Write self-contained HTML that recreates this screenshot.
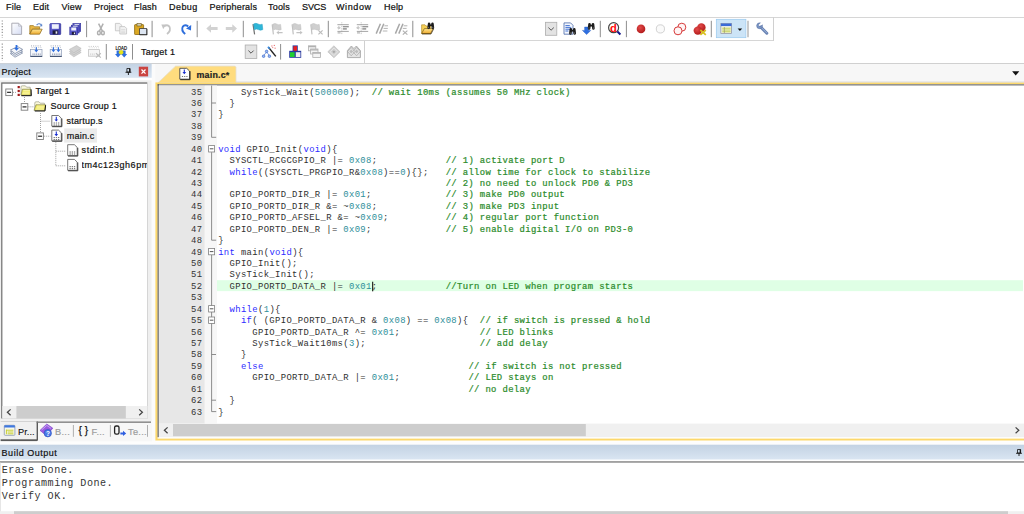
<!DOCTYPE html>
<html lang="en"><head><meta charset="utf-8"><title>uVision</title>
<style>
html,body{margin:0;padding:0;background:#fff;}
body{width:1024px;height:514px;position:relative;overflow:hidden;font-family:"Liberation Sans", sans-serif;color:#222;}
.abs{position:absolute;}
.menu span{position:absolute;top:1.4px;-webkit-text-stroke:0.22px #111;font-size:9px;letter-spacing:0.2px;line-height:12px;color:#111;white-space:nowrap;}
.ui{-webkit-text-stroke:0.2px currentColor;font-family:"Liberation Sans", sans-serif;font-size:9px;letter-spacing:0.2px;line-height:12px;color:#111;white-space:pre;position:absolute;}
.ln{position:absolute;left:159px;width:43.4px;text-align:right;font-family:"Liberation Mono", monospace;font-size:8.9px;letter-spacing:0.36px;color:#333;height:11.43px;line-height:11.43px;}
.cl{position:absolute;left:218.2px;font-family:"Liberation Mono", monospace;font-size:8.9px;letter-spacing:0.36px;color:#303030;white-space:pre;height:11.43px;line-height:11.43px;}
.c{color:#2c8c2c;-webkit-text-stroke:0.22px #2c8c2c;}
.n{color:#2f8f9a;}
.k{color:#2b2bff;}
.bo{position:absolute;left:1.7px;font-family:"Liberation Mono", monospace;font-size:10.1px;letter-spacing:0.5px;color:#363636;white-space:pre;line-height:13px;height:13px;}
svg{position:absolute;overflow:visible;}
</style></head><body>
<div class="menu"><span style="left:6.0px;">File</span><span style="left:33.0px;">Edit</span><span style="left:61.5px;">View</span><span style="left:94.0px;">Project</span><span style="left:134.0px;">Flash</span><span style="left:169.0px;letter-spacing:0.45px;">Debug</span><span style="left:209.5px;">Peripherals</span><span style="left:268.0px;">Tools</span><span style="left:302.0px;letter-spacing:-0.1px;">SVCS</span><span style="left:336.0px;letter-spacing:0.6px;">Window</span><span style="left:384.0px;">Help</span></div>
<svg style="left:0;top:0" width="1024" height="514" viewBox="0 0 1024 514"><rect x="0" y="17" width="1024" height="1" fill="#d6d6d6"/><rect x="0" y="40" width="773" height="1" fill="#d6d6d6"/><rect x="773" y="17" width="1" height="24" fill="#d0d0d0"/><rect x="0" y="63" width="1024" height="1" fill="#d0d0d0"/><rect x="364" y="41" width="1" height="23" fill="#d0d0d0"/></svg><svg style="left:0;top:0" width="1024" height="64" viewBox="0 0 1024 64">
<defs>
<linearGradient id="gpage" x1="0" y1="0" x2="1" y2="1"><stop offset="0" stop-color="#ffffff"/><stop offset="1" stop-color="#d5dcf3"/></linearGradient>
<linearGradient id="gfold" x1="0" y1="0" x2="0" y2="1"><stop offset="0" stop-color="#ffe795"/><stop offset="1" stop-color="#eeaa2c"/></linearGradient>
<linearGradient id="gflop" x1="0" y1="0" x2="1" y2="1"><stop offset="0" stop-color="#6a6ad8"/><stop offset="1" stop-color="#3a3aa8"/></linearGradient>
<radialGradient id="gred" cx="0.4" cy="0.35" r="0.7"><stop offset="0" stop-color="#e24a4a"/><stop offset="1" stop-color="#b01818"/></radialGradient>
<g id="bino"><path d="M1.7 0.9 L1.3 4.5 M4.7 0.9 L5.1 4.5" stroke="#1c1c1c" stroke-width="2.3" stroke-linecap="round" fill="none"/><rect x="1.7" y="1.4" width="3" height="1.5" fill="#1c1c1c"/><path d="M1.2 3.6 v1.2 M5 3.6 v1.2" stroke="#8a8a8a" stroke-width="0.6"/></g>
</defs>
<!-- grippers -->
<path d="M2.3 20.4 V38" stroke="#9c9c9c" stroke-width="1.3" stroke-dasharray="1.2 1.65"/>
<path d="M2.3 43.6 V61" stroke="#9c9c9c" stroke-width="1.3" stroke-dasharray="1.2 1.65"/>
<!-- separators row1 -->
<g stroke="#8e8e8e" stroke-width="1">
<path d="M86.6 20.8 V37.2 M152.1 20.8 V37.2 M197.2 20.8 V37.2 M243.3 20.8 V37.2 M328.3 20.8 V37.2 M412.8 20.8 V37.2 M600.3 20.8 V37.2 M626.4 20.8 V37.2 M711.3 20.8 V37.2"/>
<path d="M748 20.8 V37.2" stroke="#b4b4b4" stroke-width="1.4"/>
</g>
<!-- New -->
<path d="M11.8 23.2 H18.6 L21.6 26.2 V34.4 H11.8 Z" fill="url(#gpage)" stroke="#a4a4ae" stroke-width="0.9"/>
<path d="M18.6 23.2 V26.2 H21.6" fill="none" stroke="#b4b4be" stroke-width="0.7"/>
<!-- Open -->
<path d="M29.8 34 V25.6 H33.4 L34.4 26.8 H39.6 V29.2 H32.2 Z" fill="#e9b846" stroke="#9a741c" stroke-width="0.7"/>
<path d="M29.8 34.2 L32.4 29.2 H42.2 L39.6 34.2 Z" fill="url(#gfold)" stroke="#8a661a" stroke-width="0.7"/>
<path d="M36.6 25.2 Q38.8 22.6 41 24.6" fill="none" stroke="#5a84cc" stroke-width="1.2"/>
<path d="M39.6 26.4 L42.3 26.2 L42 23.4 Z" fill="#5a84cc"/>
<!-- Save -->
<g id="flop"><rect x="49.9" y="23.6" width="10.8" height="10.9" rx="0.6" fill="url(#gflop)" stroke="#2e2e98" stroke-width="0.7"/>
<rect x="51.9" y="24.2" width="6.9" height="4.6" fill="#eef1fb"/>
<rect x="52.6" y="30.4" width="5.6" height="4" fill="#1c1c3a"/>
<rect x="55.6" y="31.3" width="1.7" height="2.4" fill="#e8e8f4"/></g>
<!-- Save all -->
<g transform="translate(69.5,23.2)">
<rect x="3.4" y="0.3" width="7.8" height="7.8" fill="#5656c6" stroke="#2e2e98" stroke-width="0.6"/>
<rect x="5" y="0.8" width="4.6" height="2.6" fill="#e4e8f8"/>
<rect x="1.8" y="2" width="7.8" height="7.8" fill="#5656c6" stroke="#2e2e98" stroke-width="0.6"/>
<rect x="3.4" y="2.5" width="4.6" height="2.6" fill="#e4e8f8"/>
<rect x="0.3" y="3.8" width="7.8" height="7.8" fill="#5a5ace" stroke="#2e2e98" stroke-width="0.6"/>
<rect x="1.8" y="4.3" width="4.8" height="3" fill="#eef1fb"/>
<rect x="2.3" y="8.6" width="3.8" height="3" fill="#1c1c3a"/>
<rect x="4.4" y="9.3" width="1.1" height="1.7" fill="#e8e8f4"/>
</g>
<!-- Cut -->
<g fill="none" stroke="#b0b0b0" stroke-width="1.5">
<path d="M98.6 23.6 L102.4 31.2 M103.2 23.6 L99.4 31.2"/>
<ellipse cx="98.9" cy="32.9" rx="1.4" ry="1.9"/><ellipse cx="102.9" cy="32.9" rx="1.4" ry="1.9"/>
</g>
<!-- Copy -->
<g fill="#f1f1f1" stroke="#c2c2c2" stroke-width="0.8">
<path d="M115.4 23.4 H119.8 L121.6 25.2 V30.8 H115.4 Z"/>
<path d="M119.8 26.6 H124.8 L126.6 28.4 V34 H119.8 Z"/>
<path d="M121.2 29.6 h4 M121.2 31.2 h4 M121.2 32.6 h4" stroke="#cfcfcf" stroke-width="0.6"/>
</g>
<!-- Paste -->
<rect x="134.6" y="24.6" width="9" height="9.9" rx="0.6" fill="#dba823" stroke="#8c6a12" stroke-width="0.8"/>
<rect x="137" y="23.4" width="4.2" height="2.6" fill="#d8d0b0" stroke="#6e5a1e" stroke-width="0.6"/>
<rect x="139.6" y="28.6" width="7.1" height="6" fill="#dce5f1" stroke="#3c3c3c" stroke-width="0.8"/>
<path d="M139.6 34.9 H147.1 V29" fill="none" stroke="#222" stroke-width="0.6"/>
<!-- Undo -->
<path d="M167 34 Q171.4 30.4 169.4 26.6 Q167.4 24 164 26.4" fill="none" stroke="#c4c4c4" stroke-width="1.8"/>
<path d="M161.4 24.6 L165.8 24.6 L163.2 29.2 Z" fill="#c4c4c4"/>
<!-- Redo -->
<path d="M185.2 34 Q180.8 30.4 182.8 26.6 Q184.8 24 188.2 26.4" fill="none" stroke="#2f6fdc" stroke-width="1.9"/>
<path d="M191.2 25 L191 30.4 L186 28.6 Z" fill="#2f6fdc"/>
<!-- Back / Fwd -->
<path d="M206.3 28.5 L211 24.2 V26.9 H217.6 V30.1 H211 V32.8 Z" fill="#d2d2d2"/>
<path d="M237 28.5 L232.3 24.2 V26.9 H225.8 V30.1 H232.3 V32.8 Z" fill="#d2d2d2"/>
<!-- Flag cyan -->
<path d="M253 24.2 L254.6 34.4" stroke="#6e6e6e" stroke-width="1.2"/>
<path d="M253.6 24 Q256 22.6 258 24 Q260 25.2 262.2 24.2 L262.8 29.6 Q260.4 30.8 258.4 29.6 Q256.4 28.4 254.4 29.8 Z" fill="#2fb6d8" stroke="#1f9cc0" stroke-width="0.5"/>
<!-- gray flags -->
<g id="gflag"><path d="M272.2 24.4 L273.4 34.4" stroke="#c2c2c2" stroke-width="1.2"/>
<path d="M272.8 24.2 Q275 22.8 277 24.2 Q278.8 25.2 280.6 24.4 L281.2 29.6 Q279 30.6 277.2 29.6 Q275.4 28.6 273.6 29.8 Z" fill="#cfcfcf" stroke="#bdbdbd" stroke-width="0.5"/></g>
<path d="M276.4 32.6 L278.8 30.8 V31.9 H282.6 V33.3 H278.8 V34.4 Z" fill="#c2c2c2"/>
<use href="#gflag" x="19.9"/>
<path d="M302.6 32.6 L300.2 30.8 V31.9 H296.4 V33.3 H300.2 V34.4 Z" fill="#c2c2c2"/>
<use href="#gflag" x="38.6"/>
<path d="M318.4 30.4 L322.6 34.4 M322.6 30.4 L318.4 34.4" stroke="#bcbcbc" stroke-width="1.2"/>
<!-- indent -->
<g id="ind" fill="none">
<path d="M337.4 24.7 H348.8 M337.4 31.4 H348.8" stroke="#a6a6a6" stroke-width="1"/>
<path d="M342.9 26.7 H348.8" stroke="#929292" stroke-width="1.3"/>
<path d="M342.9 28.9 H346.8" stroke="#8a8a8a" stroke-width="1.4"/>
<path d="M337.6 32.9 H340.6" stroke="#b4b4b4" stroke-width="1.2"/>
<path d="M341.8 22.4 V35" stroke="#a0a0a0" stroke-width="0.7" stroke-dasharray="0.9 0.9"/>
</g>
<path d="M337 27.8 H339 M338.6 26.4 L340.4 27.8 L338.6 29.2 Z" stroke="#c4c4c4" stroke-width="0.8" fill="#c4c4c4"/>
<use href="#ind" x="19.4"/>
<path d="M360 27.8 H358 M358.4 26.4 L356.6 27.8 L358.4 29.2 Z" stroke="#c4c4c4" stroke-width="0.8" fill="#c4c4c4"/>
<!-- comment / uncomment -->
<g stroke="#a8a8a8" stroke-width="1.5" fill="none">
<path d="M376.2 33.6 L380.4 23.8 M379.6 33.6 L383.8 23.8"/>
<path d="M384.4 25.8 H388 M383.6 28.4 H387.8 M382.8 31 H387.4" stroke-width="1" stroke="#b4b4b4"/>
<path d="M395.4 33.6 L399.6 23.8 M398.8 33.6 L403 23.8"/>
<path d="M403.6 25.8 H407.4 M402.8 28.4 H406.6" stroke-width="1" stroke="#b4b4b4"/>
<path d="M402.8 30.6 L407.4 34.6 M407.4 30.6 L402.8 34.6" stroke-width="1.2" stroke="#b0b0b0"/>
</g>
<!-- find in files -->
<path d="M421.6 33.4 V24.8 H425 L426 26 H430.8 V33.4 Z" fill="#f5cf55" stroke="#a8842a" stroke-width="0.6"/>
<path d="M421.6 33.5 L424.4 28.6 H433.2 L430.6 33.5 Z" fill="url(#gfold)" stroke="#7a5a14" stroke-width="0.7"/>
<path d="M422 34 H431 L433.6 29" fill="none" stroke="#3a2a0a" stroke-width="0.7"/>
<use href="#bino" transform="translate(427.2,22.8) scale(1.12)"/>
<!-- combo button -->
<rect x="545.4" y="22.3" width="11.4" height="13" fill="#e3e3e3" stroke="#adadad" stroke-width="0.8"/>
<path d="M548.4 27.6 L551.1 30.2 L553.8 27.6" fill="none" stroke="#444" stroke-width="0.9"/>
<!-- doc + binoculars -->
<path d="M564 22.9 H570.6 L573 25.3 V34.2 H564 Z" fill="#f4f8ff" stroke="#4a68a8" stroke-width="0.8"/>
<path d="M565.4 25.6 h4.4 M565.4 27.4 h5.8 M565.4 29.2 h5.8 M565.4 31 h3" stroke="#3a6cd0" stroke-width="0.95"/>
<use href="#bino" transform="translate(568.9,28.3) scale(1.14)"/>
<!-- blue down arrow + binoculars -->
<path d="M584.6 27 H588.6 V30.4 H590.8 L586.6 34.6 L582.4 30.4 H584.6 Z" fill="#2f6fe0" stroke="#2458b8" stroke-width="0.4"/>
<use href="#bino" transform="translate(587.6,23.2) scale(1.14)"/>
<!-- debug -->
<circle cx="613.6" cy="27.7" r="5" fill="#fff" stroke="#444" stroke-width="1.2"/>
<path d="M617.4 31.6 L620.4 34.4" stroke="#14148a" stroke-width="2"/>
<text x="609.9" y="31.6" font-family="Liberation Sans, sans-serif" font-weight="bold" font-size="11.2" fill="#ff0a0a">d</text>
<!-- red ball -->
<circle cx="641" cy="28.9" r="4.3" fill="url(#gred)"/>
<!-- empty circle -->
<circle cx="660.4" cy="28.9" r="4.1" fill="#fafafa" stroke="#c6c6c6" stroke-width="0.8"/>
<!-- double circles -->
<circle cx="681.8" cy="27.2" r="4" fill="#fff4f4" stroke="#d63a3a" stroke-width="1"/>
<circle cx="678" cy="30.8" r="4" fill="#fff4f4" stroke="#d63a3a" stroke-width="1"/>
<!-- red balls + x -->
<circle cx="701.4" cy="27.4" r="4.2" fill="url(#gred)"/>
<circle cx="697.8" cy="30.6" r="4.2" fill="url(#gred)"/>
<path d="M700.4 30 L705.8 34.8 M705.8 30 L700.4 34.8" stroke="#d8c020" stroke-width="1.7"/>
<!-- selected window button -->
<rect x="716.3" y="19.3" width="29.6" height="18.4" fill="#cce4f7" stroke="#99c9ef" stroke-width="0.7"/>
<rect x="720.9" y="23.5" width="10.6" height="10" fill="#f6f6e6" stroke="#8a8a9a" stroke-width="0.7"/>
<rect x="720.9" y="23.5" width="10.6" height="2.6" fill="#3a6ad8"/>
<path d="M722.2 28.2 H730.6 M722.2 30 H730.6 M722.2 31.8 H730.6" stroke="#b8c838" stroke-width="0.9"/>
<path d="M724.4 27 V33" stroke="#8a8a6a" stroke-width="0.6"/>
<path d="M737.6 28.4 H742.2 L739.9 30.9 Z" fill="#111"/>
<!-- wrench -->
<path d="M760.6 27 L766.8 33.2" stroke="#6a84b4" stroke-width="3" stroke-linecap="round"/>
<path d="M761 27.2 L766.6 32.8" stroke="#9ab0d8" stroke-width="1" stroke-linecap="round"/>
<path d="M756.6 25.6 Q756.6 29 760 28.8 Q763 28.2 762.4 24.8 L760 26.8 L758.2 25 L760.4 22.8 Q757 22.4 756.6 25.6 Z" fill="#7a94c4" stroke="#546ea0" stroke-width="0.5"/>
</svg>

<svg style="left:0;top:0" width="400" height="64" viewBox="0 0 400 64">
<g stroke="#8e8e8e" stroke-width="1"><path d="M106.3 44 V59.6 M132.5 44 V59.6 M280.6 44 V59.6"/></g>
<!-- translate: stack + arrow -->
<g fill="#f4f6fa" stroke="#6a7a98" stroke-width="0.7">
<path d="M10.4 53.6 L17.6 50.2 L22.6 53 L15 57.2 Z"/>
<path d="M10.4 51.8 L17.6 48.4 L22.6 51.2 L15 55.4 Z"/>
<path d="M10.4 50 L17.6 46.6 L22.6 49.4 L15 53.6 Z"/>
</g>
<path d="M15.6 45 H17.4 V48 H19 L16.5 50.8 L14 48 H15.6 Z" fill="#2f6fe0"/>
<!-- build -->
<g id="bld">
<rect x="30.6" y="49.6" width="11.4" height="6.6" fill="#f6f8fc" stroke="#8c9ab6" stroke-width="0.7"/>
<path d="M30.4 56.4 H42.2" stroke="#3a4a6a" stroke-width="1"/>
<path d="M33 53.4 V55.2 M34.8 53.4 V55.2 M36.6 53.4 V55.2 M38.4 53.4 V55.2 M40.2 53.4 V55.2" stroke="#8a96b0" stroke-width="0.8"/>
<path d="M31 45.9 H42" stroke="#9aa0b0" stroke-width="0.9" stroke-dasharray="1 1.2"/>
<path d="M31.6 47.6 H41.4" stroke="#b4bac8" stroke-width="0.8" stroke-dasharray="1 1.2"/>
</g>
<path d="M35.7 47.2 H36.9 V50 H38.2 L36.3 52.4 L34.4 50 H35.7 Z" fill="#2f6fe0"/>
<!-- rebuild -->
<use href="#bld" x="19.6"/>
<path d="M52.8 47.2 H54 V49.8 H55.3 L53.4 52.2 L51.5 49.8 H52.8 Z" fill="#2f6fe0"/>
<path d="M57.8 47.2 H59 V49.8 H60.3 L58.4 52.2 L56.5 49.8 H57.8 Z" fill="#2f6fe0"/>
<!-- batch build (gray stack) -->
<g fill="#d2d2d2" stroke="#b8b8b8" stroke-width="0.6">
<path d="M69.4 53.4 L76.6 49.6 L81.2 52.4 L73.8 56.8 Z"/>
<path d="M69.4 51.4 L76.6 47.6 L81.2 50.4 L73.8 54.8 Z"/>
<path d="M69.4 49.4 L76.6 45.6 L81.2 48.4 L73.8 52.8 Z"/>
</g>
<!-- stop build (gray) -->
<rect x="88.4" y="49.6" width="11" height="6.6" fill="#f6f6f6" stroke="#c4c4c4" stroke-width="0.8"/>
<path d="M88.6 46.4 H99.4" stroke="#c8c8c8" stroke-width="1" stroke-dasharray="1 1.2"/>
<path d="M89.4 47.8 H99" stroke="#d4d4d4" stroke-width="0.8" stroke-dasharray="1 1.2"/>
<path d="M90.6 53.4 V55.2 M92.4 53.4 V55.2 M94.2 53.4 V55.2" stroke="#cfcfcf" stroke-width="0.8"/>
<path d="M96 53.2 L100.8 57.6 M100.8 53.2 L96 57.6" stroke="#bcbcbc" stroke-width="1.2"/>
<!-- LOAD -->
<text x="115.4" y="49.5" font-family="Liberation Sans, sans-serif" font-size="4.5" fill="#000" stroke="#000" stroke-width="0.15" textLength="11.6" lengthAdjust="spacingAndGlyphs">LOAD</text>
<path d="M116.6 50.4 H119.4 V54 H121 L118 57.6 L115 54 H116.6 Z" fill="#2f6fe0"/>
<path d="M122.8 50.4 H125.6 V54 H127.2 L124.2 57.6 L121.2 54 H122.8 Z" fill="#2f6fe0"/>
<circle cx="121.1" cy="52.3" r="2.15" fill="#e4e41c" stroke="#b4b414" stroke-width="0.4"/>
<!-- combo button -->
<rect x="245.2" y="45" width="11.6" height="13.4" fill="#e3e3e3" stroke="#adadad" stroke-width="0.8"/>
<path d="M248.4 50.6 L251 53.2 L253.6 50.6" fill="none" stroke="#444" stroke-width="0.9"/>
<!-- magic wand -->
<path d="M268.6 47.4 L275.8 56.4" stroke="#222" stroke-width="1.5"/>
<path d="M268 46.8 L269.6 48.8" stroke="#3a8ae0" stroke-width="1.8"/>
<path d="M271.4 46 h1 M273.8 45.4 h1 M274.6 48.2 h1 M272.4 47.6 h0.8" stroke="#e03a3a" stroke-width="0.9"/>
<g fill="#9ab8f0" stroke="#2f5fc8" stroke-width="0.6">
<circle cx="266.6" cy="51.4" r="1.3"/><circle cx="263.6" cy="56.2" r="1.3"/><circle cx="269.4" cy="56.2" r="1.3"/>
</g>
<path d="M266.2 52.4 L264 55.2 M267 52.4 L269 55.2" stroke="#2f5fc8" stroke-width="0.6"/>
<!-- blocks -->
<rect x="289.2" y="50.8" width="12" height="7" fill="#2a3aa0"/>
<rect x="292.6" y="45.4" width="5.2" height="6" fill="#2a3aa0"/>
<rect x="293.4" y="46.2" width="3.6" height="4.6" fill="#e82020"/>
<rect x="290" y="52.2" width="4.6" height="4.8" fill="#20d030"/>
<rect x="295.8" y="52.2" width="4.6" height="4.8" fill="#f0f0f0"/>
<!-- windows gray -->
<g fill="#f4f4f4" stroke="#b0b0b0" stroke-width="0.8">
<rect x="308.4" y="45.8" width="7.4" height="5"/><rect x="310.6" y="49" width="7.4" height="5"/><rect x="312.8" y="52.4" width="7.8" height="5"/>
</g>
<path d="M308.4 46.6 h7.4 M310.6 49.8 h7.4 M312.8 53.2 h7.8" stroke="#b0b0b0" stroke-width="1.2"/>
<!-- diamond gray -->
<path d="M333.9 45.8 L340 51.8 L333.9 57.8 L327.8 51.8 Z" fill="#cfcfcf" stroke="#bcbcbc" stroke-width="0.6"/>
<path d="M333.9 48 L337.6 51.8 L333.9 55.6 L330.2 51.8 Z" fill="none" stroke="#efefef" stroke-width="0.7"/>
<path d="M333.9 50.4 L335.4 51.8 L333.9 53.2 L332.4 51.8 Z" fill="#a8a8a8"/>
<!-- double diamond envelope -->
<path d="M347.4 57.6 V50.6 L351.4 46 L353.9 48.6 L356.4 46 L360.4 50.6 V57.6 Z" fill="#e4e4e4" stroke="#9c9c9c" stroke-width="0.8"/>
<path d="M351.2 47.4 L355 51.6 L351.2 55.8 L347.6 51.6 Z M356.6 47.4 L360.2 51.6 L356.6 55.8 L352.8 51.6 Z" fill="none" stroke="#a8a8a8" stroke-width="0.7"/>
<path d="M351.2 49.6 L353 51.6 L351.2 53.6 L349.4 51.6 Z M356.6 49.6 L358.4 51.6 L356.6 53.6 L354.8 51.6 Z" fill="#bdbdbd"/>
</svg>
<div class="ui" style="left:141px;top:46.2px">Target 1</div>

<svg style="left:0;top:0" width="1024" height="514" viewBox="0 0 1024 514"><defs><linearGradient id="lg1" x1="0" y1="0" x2="0" y2="1"><stop offset="0" stop-color="#c3d2e3"/><stop offset="1" stop-color="#d9e5f2"/></linearGradient></defs><rect x="0" y="63.6" width="151.7" height="14.2" fill="url(#lg1)"/></svg><div class="ui" style="left:1.5px;top:65.7px">Project</div><svg style="left:120px;top:64px" width="32" height="15" viewBox="120 64 32 15">
<path d="M126.9 68.5 H130 V72 H126.9 Z" fill="none" stroke="#111" stroke-width="0.8"/>
<path d="M129.7 68.5 V72" stroke="#111" stroke-width="1.2"/>
<path d="M125.5 72.3 H131.3" stroke="#111" stroke-width="0.9"/>
<path d="M128.4 72.4 V75" stroke="#111" stroke-width="0.9"/>
<rect x="138.8" y="66.7" width="9.3" height="9.7" fill="#ca4542"/>
<path d="M141.5 69.5 L145.5 73.6 M145.5 69.5 L141.5 73.6" stroke="#fff" stroke-width="1.25"/>
</svg>

<svg style="left:0;top:0" width="1024" height="514" viewBox="0 0 1024 514"><rect x="0" y="80.3" width="151.6" height="341" fill="#efefef"/><rect x="1.2" y="82.4" width="146.8" height="336.8" fill="#e3e3e3"/><rect x="1.2" y="82.4" width="146" height="336" fill="#707070"/><rect x="2.4" y="83.7" width="144.8" height="334.7" fill="#fff"/><rect x="64.2" y="128.4" width="32.8" height="14.2" fill="#ebebeb"/>
</svg><svg style="left:0;top:0" width="152" height="200" viewBox="0 0 152 200">
<defs>
<g id="fsrc"><path d="M0.5 0.5 H7.2 L10 3.2 V11.2 H0.5 Z" fill="#fff" stroke="#555" stroke-width="0.8"/>
<path d="M0.9 11.7 H10.6 V3.6" fill="none" stroke="#222" stroke-width="0.8"/>
<path d="M5 1.8 V5.6" stroke="#1a2fd0" stroke-width="1.1"/><path d="M3.2 4.4 L5 6.6 L6.8 4.4 Z" fill="#1a2fd0"/>
<path d="M2.3 8 h1.3 M4.5 8 h1.3 M6.7 8 h1.3 M2.3 10 h1.3 M4.5 10 h1.3 M6.7 10 h1.3" stroke="#444" stroke-width="0.8"/></g>
<g id="fhdr"><path d="M0.5 0.5 H7.2 L10 3.2 V11.4 H0.5 Z" fill="#fff" stroke="#555" stroke-width="0.8"/>
<path d="M0.9 11.9 H10.6 V3.6" fill="none" stroke="#222" stroke-width="0.8"/>
<path d="M2.3 7.8 h1.3 M4.5 7.8 h1.3 M6.7 7.8 h1.3 M2.3 9.8 h1.3 M4.5 9.8 h1.3 M6.7 9.8 h1.3" stroke="#333" stroke-width="0.8"/></g>
<g id="xbox"><rect x="0.4" y="0.4" width="6.6" height="6.6" fill="#fff" stroke="#7c7c7c" stroke-width="0.9"/><path d="M1.7 3.7 H5.7" stroke="#111" stroke-width="1.1"/></g>
</defs>
<!-- dotted connectors -->
<g stroke="#8c8c8c" stroke-width="0.8" stroke-dasharray="1 1" fill="none">
<path d="M13 92.4 H17"/>
<path d="M24.5 97 V103"/>
<path d="M28.4 106.8 H33.4"/>
<path d="M40.5 113 V136.2"/>
<path d="M40.5 121.2 H50.6"/>
<path d="M44.2 136.2 H50.6"/>
<path d="M55.8 142.2 V165.8"/>
<path d="M55.8 151.2 H66"/>
<path d="M55.8 165.8 H66"/>
</g>
<use href="#xbox" x="5.4" y="88.6"/>
<use href="#xbox" x="20.8" y="103.2"/>
<use href="#xbox" x="36.4" y="132.5"/>
<!-- target icon -->
<g fill="#a01818"><rect x="17.6" y="86" width="2.2" height="2.2"/><rect x="17.6" y="89.9" width="2.2" height="2.2"/><rect x="17.6" y="93.8" width="2.2" height="2.2"/></g>
<path d="M21 95 V87 Q21 85.8 22.2 85.8 H25.4 L26.6 87.2 H30.2 V95 Z" fill="#fbf9dc" stroke="#8e8e7a" stroke-width="0.6"/>
<path d="M21 95.2 L22.4 89.2 H31 L30.4 95.2 Z" fill="#f1ea62" stroke="#6e6e4a" stroke-width="0.6"/>
<path d="M23.4 90.6 H29.8 M23 92.2 H29.6 M22.6 93.8 H29.4" stroke="#fbf8c0" stroke-width="0.7"/>
<path d="M31 89.4 L31.4 95.7 H21.4" fill="none" stroke="#111" stroke-width="1"/>
<!-- group folder icon -->
<path d="M34.8 110.2 V103 Q34.8 101.8 36 101.8 H39 L40.2 103.2 H44.4 V110.2 Z" fill="#fbf9dc" stroke="#8e8e7a" stroke-width="0.6"/>
<path d="M34 110.4 L36 104.8 H45.6 L44.6 110.4 Z" fill="#f1ea62" stroke="#6e6e4a" stroke-width="0.6"/>
<path d="M37 106.2 H44.4 M36.6 107.8 H44.2 M36 109.2 H44" stroke="#fbf8c0" stroke-width="0.7"/>
<path d="M45.6 105.2 L45 111 H34.8" fill="none" stroke="#111" stroke-width="1"/>
<use href="#fsrc" x="51.3" y="115"/>
<use href="#fsrc" x="51.3" y="129.6"/>
<use href="#fhdr" x="67.2" y="144.2"/>
<use href="#fhdr" x="67.2" y="158.9"/>
</svg>
<div class="ui" style="left:35.6px;top:84.7px">Target 1</div>
<div class="ui" style="left:50.6px;top:100.1px">Source Group 1</div>
<div class="ui" style="left:66.5px;top:114.9px">startup.s</div>
<div class="ui" style="left:66.8px;top:129.7px">main.c</div>
<div class="ui" style="left:81.6px;top:144.1px;letter-spacing:0.55px">stdint.h</div>
<div class="ui" style="left:81.6px;top:158.9px;width:65.9px;overflow:hidden;letter-spacing:0.5px">tm4c123gh6pm.h</div>

<svg style="left:0;top:0" width="1024" height="514" viewBox="0 0 1024 514"><rect x="2.4" y="406" width="145" height="12.5" fill="#f0f0f0"/><rect x="16.4" y="406" width="109.4" height="12.5" fill="#cdcdcd"/></svg><svg style="left:0;top:404px" width="152" height="16" viewBox="0 404 152 16">
<path d="M10.6 409.4 L7.4 412.3 L10.6 415.2" fill="none" stroke="#444" stroke-width="1.25"/>
<path d="M139.2 409.4 L142.4 412.3 L139.2 415.2" fill="none" stroke="#444" stroke-width="1.25"/>
</svg>

<svg style="left:0;top:0" width="1024" height="514" viewBox="0 0 1024 514"><rect x="0" y="422" width="152" height="21" fill="#f7f7f7"/><rect x="0" y="419.2" width="151.6" height="2.3" fill="#f0f0f0"/>
</svg><svg style="left:0;top:0" width="152" height="514" viewBox="0 0 152 514"><path d="M0.6 421.4 H38 V439.8 Q38 441.2 36.6 441.2 H0.6 Z" fill="#5a5a5a"/><rect x="0" y="421.4" width="36.6" height="17.9" fill="#f0f0f0"/></svg>
<svg style="left:0;top:0" width="1024" height="514" viewBox="0 0 1024 514"><rect x="36.6" y="421.5" width="114.4" height="1.3" fill="#787878"/>
</svg><svg style="left:0;top:416px" width="152" height="30" viewBox="0 416 152 30">
<!-- project icon -->
<rect x="4.3" y="425.3" width="10.6" height="10" rx="0.8" fill="#f8f8ec" stroke="#7a8aa8" stroke-width="0.7"/>
<path d="M4.3 426.1 Q4.3 425.3 5.1 425.3 H14.1 Q14.9 425.3 14.9 426.1 V427.6 H4.3 Z" fill="#3f78e0"/>
<path d="M6.4 429.6 V434.2 M6.4 430.2 H13.4 M7.6 432 H13.4 M7.6 433.8 H13.4" stroke="#c4cc20" stroke-width="0.9" fill="none"/>
<!-- books icon -->
<path d="M40 430.4 L46.8 424 L52.8 428.2 L46.4 435.6 Z" fill="#9a5ae0" stroke="#7a3ac8" stroke-width="0.6"/>
<path d="M41.6 430 L46.8 425.4 L51 428.4" fill="none" stroke="#c8a8f4" stroke-width="0.9"/>
<circle cx="47.8" cy="433.2" r="3.7" fill="#4a7ae8" stroke="#2a4ab8" stroke-width="0.6"/>
<text x="46" y="435.8" font-family="Liberation Sans, sans-serif" font-weight="bold" font-size="6.4" fill="#fff">?</text>
<!-- separators -->
<path d="M73.4 425 V436.8 M110.4 425 V436.8 M147.5 425 V436.8" stroke="#a6a6a6" stroke-width="0.9"/>
<!-- {} -->
<text x="78.6" y="433.8" font-family="Liberation Sans, sans-serif" font-size="10" fill="#111" stroke="#111" stroke-width="0.25" textLength="9.4" lengthAdjust="spacing">{}</text>
<!-- 0 arrow -->
<rect x="114.6" y="426" width="4.4" height="8.2" rx="1.6" fill="none" stroke="#222" stroke-width="1.3"/>
<path d="M120.4 432.4 H123 V430.8 L126.2 433.4 L123 436 V434.4 H120.4 Z" fill="#2f5fe0"/>
</svg>
<div class="ui" style="left:18.1px;top:425.8px;font-size:9.2px;letter-spacing:0.05px;color:#111;-webkit-text-stroke:0.12px #111">Pr...</div>
<div class="ui" style="left:55px;top:425.8px;color:#9c9c9c;font-size:9.2px;letter-spacing:0.3px">B...</div>
<div class="ui" style="left:91.5px;top:425.8px;color:#9c9c9c;font-size:9.2px;letter-spacing:0.3px">F...</div>
<div class="ui" style="left:128px;top:425.8px;color:#9c9c9c;font-size:9.2px;letter-spacing:0.3px">Te...</div>

<svg style="left:0;top:0" width="1024" height="514" viewBox="0 0 1024 514"><rect x="152" y="64" width="4" height="380" fill="#fbfbfb"/><rect x="155.2" y="64" width="868.8" height="18.4" fill="#f7f7f7"/></svg><svg style="left:156px;top:64px" width="100" height="20" viewBox="0 0 100 20">
<path d="M2.2 18.6 L19.6 2.1 L78.5 2.1 Q80 2.1 80 3.6 L80 18.6 Z" fill="#ffdc7e" stroke="#e6e0cf" stroke-width="0.8"/>
<g transform="translate(23.3,3.8)">
<path d="M0.5 0.5 L7.4 0.5 L10.2 3.2 L10.2 11.4 L0.5 11.4 Z" fill="#fff" stroke="#444" stroke-width="0.9"/>
<path d="M1 11.9 L10.8 11.9 L10.8 3.4" fill="none" stroke="#222" stroke-width="0.9"/>
<path d="M5 1.8 V5.4" stroke="#1a2fd0" stroke-width="1.1"/><path d="M3.2 4.3 L5 6.5 L6.8 4.3 Z" fill="#1a2fd0"/>
<path d="M2.6 8.7 h1.2 M4.8 8.7 h1.2 M7 8.7 h1.2" stroke="#777" stroke-width="1.2"/>
</g>
</svg>
<div class="ui" style="left:196.5px;top:68.5px;font-weight:bold;font-size:8.9px;color:#222">main.c*</div>
<svg style="left:1012px;top:71px" width="8" height="5" viewBox="0 0 8 5"><path d="M0.1 0.2 L7.3 0.2 L3.7 4.5 Z" fill="#111"/></svg>

<svg style="left:0;top:0" width="1024" height="514" viewBox="0 0 1024 514"><rect x="155.4" y="82.4" width="868.6" height="358.1" fill="#fcd86c"/><rect x="157.6" y="84.2" width="866.4" height="354.4" fill="#fff"/><rect x="236" y="81.6" width="788" height="0.8" fill="#d4d4d4"/><rect x="157.6" y="84.2" width="866.4" height="1.3" fill="#7c7c7c"/><rect x="157.6" y="84.2" width="1.2" height="353" fill="#525252"/><rect x="158.8" y="85.5" width="46" height="338.2" fill="#e7e7e7"/><rect x="204.8" y="85.5" width="12.2" height="338" fill="#f7f7f7"/><rect x="217" y="280.21" width="806" height="10.93" fill="#dfffe5"/></svg><svg style="left:0;top:0" width="230" height="440" viewBox="0 0 230 440"><g stroke="#808080" stroke-width="0.9" fill="none"><path d="M211.6 85.5 V137.3 H216.2"/><path d="M211.6 103.0 H216"/><path d="M211.6 152.2 V240.2 H216.2"/><path d="M211.6 255.0 V411.6 H216.2"/><path d="M211.6 354.5 H216 M211.6 400.2 H216"/></g><rect x="208.6" y="145.6" width="6" height="6.4" fill="#fff" stroke="#808080" stroke-width="0.8"/><path d="M209.8 148.8 H213.4" stroke="#444" stroke-width="0.9"/><rect x="208.6" y="248.4" width="6" height="6.4" fill="#fff" stroke="#808080" stroke-width="0.8"/><path d="M209.8 251.6 H213.4" stroke="#444" stroke-width="0.9"/><rect x="208.6" y="305.6" width="6" height="6.4" fill="#fff" stroke="#808080" stroke-width="0.8"/><path d="M209.8 308.8 H213.4" stroke="#444" stroke-width="0.9"/><rect x="208.6" y="317.0" width="6" height="6.4" fill="#fff" stroke="#808080" stroke-width="0.8"/><path d="M209.8 320.2 H213.4" stroke="#444" stroke-width="0.9"/></svg>
<div class="ln" style="top:87.50px">35</div><div class="cl" style="top:87.50px">    SysTick_Wait(<span class="n">500000</span>);  <span class="c">// wait 10ms (assumes 50 MHz clock)</span></div>
<div class="ln" style="top:98.93px">36</div><div class="cl" style="top:98.93px">  }</div>
<div class="ln" style="top:110.36px">37</div><div class="cl" style="top:110.36px">}</div>
<div class="ln" style="top:121.79px">38</div>
<div class="ln" style="top:133.22px">39</div>
<div class="ln" style="top:144.65px">40</div><div class="cl" style="top:144.65px"><span class="k">void</span> GPIO_Init(<span class="k">void</span>){</div>
<div class="ln" style="top:156.08px">41</div><div class="cl" style="top:156.08px">  SYSCTL_RCGCGPIO_R |= <span class="n">0x08</span>;            <span class="c">// 1) activate port D</span></div>
<div class="ln" style="top:167.51px">42</div><div class="cl" style="top:167.51px">  <span class="k">while</span>((SYSCTL_PRGPIO_R&amp;<span class="n">0x08</span>)==<span class="n">0</span>){};   <span class="c">// allow time for clock to stabilize</span></div>
<div class="ln" style="top:178.94px">43</div><div class="cl" style="top:178.94px">                                        <span class="c">// 2) no need to unlock PD0 &amp; PD3</span></div>
<div class="ln" style="top:190.37px">44</div><div class="cl" style="top:190.37px">  GPIO_PORTD_DIR_R |= <span class="n">0x01</span>;             <span class="c">// 3) make PD0 output</span></div>
<div class="ln" style="top:201.80px">45</div><div class="cl" style="top:201.80px">  GPIO_PORTD_DIR_R &amp;= ~<span class="n">0x08</span>;            <span class="c">// 3) make PD3 input</span></div>
<div class="ln" style="top:213.23px">46</div><div class="cl" style="top:213.23px">  GPIO_PORTD_AFSEL_R &amp;= ~<span class="n">0x09</span>;          <span class="c">// 4) regular port function</span></div>
<div class="ln" style="top:224.66px">47</div><div class="cl" style="top:224.66px">  GPIO_PORTD_DEN_R |= <span class="n">0x09</span>;             <span class="c">// 5) enable digital I/O on PD3-0</span></div>
<div class="ln" style="top:236.09px">48</div><div class="cl" style="top:236.09px">}</div>
<div class="ln" style="top:247.52px">49</div><div class="cl" style="top:247.52px"><span class="k">int</span> main(<span class="k">void</span>){</div>
<div class="ln" style="top:258.95px">50</div><div class="cl" style="top:258.95px">  GPIO_Init();</div>
<div class="ln" style="top:270.38px">51</div><div class="cl" style="top:270.38px">  SysTick_Init();</div>
<div class="ln" style="top:281.81px">52</div><div class="cl" style="top:281.81px">  GPIO_PORTD_DATA_R |= <span class="n">0x01</span>;            <span class="c">//Turn on LED when program starts</span></div>
<div class="ln" style="top:293.24px">53</div>
<div class="ln" style="top:304.67px">54</div><div class="cl" style="top:304.67px">  <span class="k">while</span>(<span class="n">1</span>){</div>
<div class="ln" style="top:316.10px">55</div><div class="cl" style="top:316.10px">    <span class="k">if</span>( (GPIO_PORTD_DATA_R &amp; <span class="n">0x08</span>) == <span class="n">0x08</span>){  <span class="c">// if switch is pressed &amp; hold</span></div>
<div class="ln" style="top:327.53px">56</div><div class="cl" style="top:327.53px">      GPIO_PORTD_DATA_R ^= <span class="n">0x01</span>;              <span class="c">// LED blinks</span></div>
<div class="ln" style="top:338.96px">57</div><div class="cl" style="top:338.96px">      SysTick_Wait10ms(<span class="n">3</span>);                    <span class="c">// add delay</span></div>
<div class="ln" style="top:350.39px">58</div><div class="cl" style="top:350.39px">    }</div>
<div class="ln" style="top:361.82px">59</div><div class="cl" style="top:361.82px">    <span class="k">else</span>                                    <span class="c">// if switch is not pressed</span></div>
<div class="ln" style="top:373.25px">60</div><div class="cl" style="top:373.25px">      GPIO_PORTD_DATA_R |= <span class="n">0x01</span>;            <span class="c">// LED stays on</span></div>
<div class="ln" style="top:384.68px">61</div><div class="cl" style="top:384.68px">                                            <span class="c">// no delay</span></div>
<div class="ln" style="top:396.11px">62</div><div class="cl" style="top:396.11px">  }</div>
<div class="ln" style="top:407.54px">63</div><div class="cl" style="top:407.54px">}</div>
<svg style="left:0;top:0" width="1024" height="514" viewBox="0 0 1024 514"><rect x="372.2" y="281.71" width="1" height="9.6" fill="#000"/><rect x="158.8" y="423.6" width="865.2" height="13.6" fill="#f0f0f0"/><rect x="173" y="424" width="412.8" height="12.2" fill="#cdcdcd"/></svg><svg style="left:156px;top:422px" width="868" height="16" viewBox="156 422 868 16">
<path d="M167.6 427.4 L164.4 430.3 L167.6 433.2" fill="none" stroke="#444" stroke-width="1.25"/>
<path d="M1015.6 427.4 L1018.8 430.3 L1015.6 433.2" fill="none" stroke="#444" stroke-width="1.25"/>
</svg>

<svg style="left:0;top:0" width="1024" height="514" viewBox="0 0 1024 514"><rect x="0" y="441.4" width="1024" height="3.4" fill="#fdfdfd"/><defs><linearGradient id="lg2" x1="0" y1="0" x2="0" y2="1"><stop offset="0" stop-color="#c3d2e3"/><stop offset="1" stop-color="#d9e5f2"/></linearGradient></defs><rect x="0" y="444.7" width="1024" height="14.8" fill="url(#lg2)"/></svg><div class="ui" style="left:1.6px;top:447px;letter-spacing:0.52px">Build Output</div><svg style="left:0;top:0" width="1024" height="514" viewBox="0 0 1024 514"><rect x="0" y="461.2" width="1024" height="1.5" fill="#8a8a8a"/></svg><svg style="left:1008px;top:446px" width="14" height="12" viewBox="1005 445.2 14 12">
<path d="M1014.5 448.7 H1017.6 V452.2 H1014.5 Z" fill="none" stroke="#111" stroke-width="0.8"/>
<path d="M1017.3 448.7 V452.2" stroke="#111" stroke-width="1.2"/>
<path d="M1013.1 452.5 H1018.9" stroke="#111" stroke-width="0.9"/>
<path d="M1016 452.6 V455.2" stroke="#111" stroke-width="0.9"/>
</svg>

<div class="bo" style="top:464.3px">Erase Done.</div><div class="bo" style="top:477.3px">Programming Done.</div><div class="bo" style="top:490.3px">Verify OK.</div><svg style="left:0;top:0" width="1024" height="514" viewBox="0 0 1024 514"><rect x="0" y="462.7" width="1" height="52" fill="#e6e6e6"/><rect x="0" y="511.2" width="1024" height="3" fill="#f0f0f0"/><rect x="14" y="511.2" width="994" height="3" fill="#cdcdcd"/>
</svg></body></html>
